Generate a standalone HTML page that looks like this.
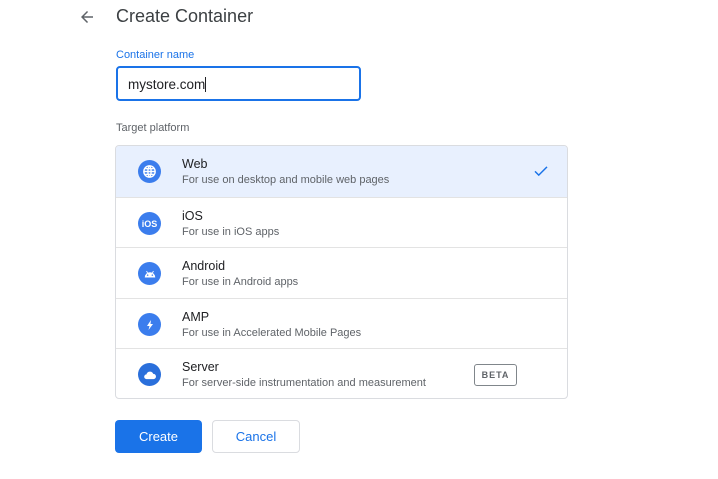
<!DOCTYPE html>
<html><head><meta charset="utf-8"><style>
*{margin:0;padding:0;box-sizing:border-box}
body{width:718px;height:479px;background:#fff;font-family:"Liberation Sans",sans-serif;position:relative;overflow:hidden;color:#202124}
.abs{position:absolute}
.row{position:absolute;left:0;width:452px;height:51px;border-top:1px solid #e3e3e3}
.row .t{position:absolute;left:66px;top:11px;font-size:12.5px;color:#202124}
.row .s{position:absolute;left:66px;top:28px;font-size:11px;color:#5f6368}
.ic{position:absolute;left:22px;top:14px;width:23px;height:23px;border-radius:50%;background:#3b7ded;display:flex;align-items:center;justify-content:center}
</style></head><body>
<svg class="abs" style="left:78px;top:8px" width="18" height="18" viewBox="0 0 24 24"><path d="M20 11H7.8l5.6-5.6L12 4l-8 8 8 8 1.4-1.4L7.8 13H20z" fill="#5f6368"/></svg>
<div class="abs" style="left:116px;top:6px;font-size:18px;color:#3c4043">Create Container</div>
<div class="abs" style="left:116px;top:49px;font-size:11px;color:#1a73e8">Container name</div>
<div class="abs" style="left:116px;top:66px;width:245px;height:35px;border:2px solid #1a73e8;border-radius:4px;padding:9px 0 0 10px;font-size:13.5px;color:#202124">mystore.com<span style="display:inline-block;width:1px;height:15px;background:#202124;vertical-align:-3px"></span></div>
<div class="abs" style="left:116px;top:122px;font-size:11px;color:#5f6368">Target platform</div>
<div class="abs" style="left:115px;top:145px;width:453px;height:254px;border:1px solid #dadce0;border-radius:4px;overflow:hidden">
 <div class="row" style="top:0;border-top:none;background:#e8f0fe;height:51px">
  <div class="ic" style="top:14px"><svg width="17" height="17" viewBox="0 0 24 24" fill="none" stroke="#fff" stroke-width="2"><circle cx="12" cy="12" r="8"/><path d="M4 12h16M12 4c-3 3-3 13 0 16M12 4c3 3 3 13 0 16M6 8h12M6 16h12"/></svg></div>
  <div class="t">Web</div><div class="s">For use on desktop and mobile web pages</div>
  <svg class="abs" style="left:415px;top:16px" width="20" height="18" viewBox="0 0 24 24"><path d="M4 12.5l5 5L20 6.5" fill="none" stroke="#1a73e8" stroke-width="2"/></svg>
 </div>
 <div class="row" style="top:51px">
  <div class="ic"><span style="color:#fff;font-size:9px;font-weight:bold">iOS</span></div>
  <div class="t">iOS</div><div class="s">For use in iOS apps</div>
 </div>
 <div class="row" style="top:101px">
  <div class="ic"><svg width="14" height="14" viewBox="0 0 24 24"><path d="M3 18a9 9 0 0 1 18 0z" fill="#fff"/><circle cx="8" cy="14" r="1.3" fill="#3b7ded"/><circle cx="16" cy="14" r="1.3" fill="#3b7ded"/><path d="M6 7l2 3M18 7l-2 3" stroke="#fff" stroke-width="1.5"/></svg></div>
  <div class="t">Android</div><div class="s">For use in Android apps</div>
 </div>
 <div class="row" style="top:152px">
  <div class="ic"><svg width="12" height="14" viewBox="0 0 24 24"><path d="M14 2L6 14h5l-2 8 9-12h-5z" fill="#fff"/></svg></div>
  <div class="t">AMP</div><div class="s">For use in Accelerated Mobile Pages</div>
 </div>
 <div class="row" style="top:202px;height:52px">
  <div class="ic" style="background:#2a6fdb"><svg width="14" height="12" viewBox="0 0 24 20"><path d="M6 17a4 4 0 0 1 0-8 6 6 0 0 1 11.5-1A4.5 4.5 0 0 1 18 17z" fill="#fff"/></svg></div>
  <div class="t">Server</div><div class="s">For server-side instrumentation and measurement</div>
  <div class="abs" style="left:358px;top:15px;width:43px;height:22px;border:1px solid #80868b;border-radius:3px;font-size:9px;letter-spacing:1px;color:#5f6368;font-weight:bold;text-align:center;line-height:20px">BETA</div>
 </div>
</div>
<div class="abs" style="left:115px;top:420px;width:87px;height:33px;background:#1a73e8;border-radius:4px;color:#fff;font-size:13px;text-align:center;line-height:33px">Create</div>
<div class="abs" style="left:212px;top:420px;width:88px;height:33px;border:1px solid #dadce0;border-radius:4px;color:#1a73e8;font-size:13px;text-align:center;line-height:31px">Cancel</div>
</body></html>
